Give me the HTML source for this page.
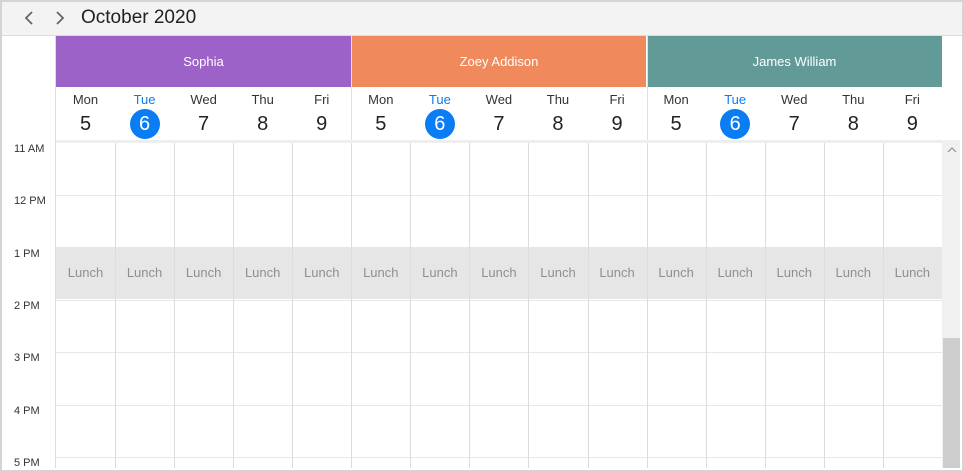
<!DOCTYPE html><html><head><style>
body{margin:0;width:964px;height:472px;overflow:hidden;background:#fff;font-family:"Liberation Sans",sans-serif;position:relative}
.a{position:absolute}
.frame{left:0;top:0;width:960px;height:468px;border:2px solid #d4d4d4}
.res{top:36px;height:51px;color:#fff;font-size:13px;display:flex;align-items:center;justify-content:center}
.day{top:88px;width:59px;height:52px;text-align:center}
.dn{font-size:13px;color:#333;margin-top:4px}
.dd{font-size:20px;color:#222;margin:2px auto 0;width:30px;height:30px;line-height:30px;border-radius:50%}
.lunch{color:#8f8f8f;font-size:13px;text-align:center;line-height:52px;top:247px;height:52px;width:59px}
.t{left:14px;font-size:11px;color:#333}
</style></head><body>
<div class="a frame"></div>
<div class="a" style="left:2px;top:2px;width:960px;height:33px;background:#f3f3f3;border-bottom:1px solid #ddd"></div>
<svg class="a" style="left:22px;top:10px" width="50" height="16"><path d="M10 2 L4 8 L10 14" stroke="#666" stroke-width="1.8" fill="none"/><path d="M35 2 L41 8 L35 14" stroke="#666" stroke-width="1.8" fill="none"/></svg>
<div class="a" style="left:81px;top:7px;font-size:19px;color:#222">October 2020</div>
<div class="a" style="left:55px;top:36px;width:1px;height:432px;background:#ddd"></div>
<div class="a" style="left:56px;top:247px;width:886px;height:52px;background:#e6e6e6"></div>
<div class="a res" style="left:56px;width:295px;background:#9c62c7">Sophia</div>
<div class="a res" style="left:352px;width:294px;background:#f08a5d">Zoey Addison</div>
<div class="a res" style="left:647px;width:295px;background:#629a98">James William</div>
<div class="a" style="left:56px;top:140px;width:886px;height:3px;background:#eee"></div>
<div class="a" style="left:942px;top:140px;width:18px;height:328px;background:#f0f0f0"></div>
<div class="a" style="left:943px;top:338px;width:17px;height:130px;background:#cdcdcd"></div>
<svg class="a" style="left:946px;top:146px" width="12" height="8"><path d="M2 6 L6 2 L10 6" stroke="#888" fill="none"/></svg>
<div id="g"></div>
<script>
var h='',days=['Mon','Tue','Wed','Thu','Fri'],nums=[5,6,7,8,9];
var labels=['11 AM','12 PM','1 PM','2 PM','3 PM','4 PM','5 PM'];
for(var i=0;i<7;i++){var y=143+i*52.3;
h+='<div class="a t" style="top:'+(y)+'px">'+labels[i]+'</div>';
if(i>0)h+='<div class="a" style="left:56px;top:'+y+'px;width:886px;height:1px;background:#e8e8e8"></div>';}
for(var g=0;g<3;g++)for(var d=0;d<5;d++){var x=56+g*295.3+d*59.06;
h+='<div class="a day" style="left:'+x+'px"><div class="dn" style="'+(d==1?'color:#0a7cf4':'')+'">'+days[d]+'</div><div class="dd" style="'+(d==1?'background:#0a7cf4;color:#fff':'')+'">'+nums[d]+'</div></div>';
h+='<div class="a lunch" style="left:'+x+'px">Lunch</div>';
if(g>0&&d==0)h+='<div class="a" style="left:'+x+'px;top:36px;width:1px;height:104px;background:#e0e0e0"></div>';
if(g+d>0)h+='<div class="a" style="left:'+x+'px;top:143px;width:1px;height:325px;background:#dcdcdc"></div>';}
document.getElementById('g').innerHTML=h;
</script>
</body></html>
